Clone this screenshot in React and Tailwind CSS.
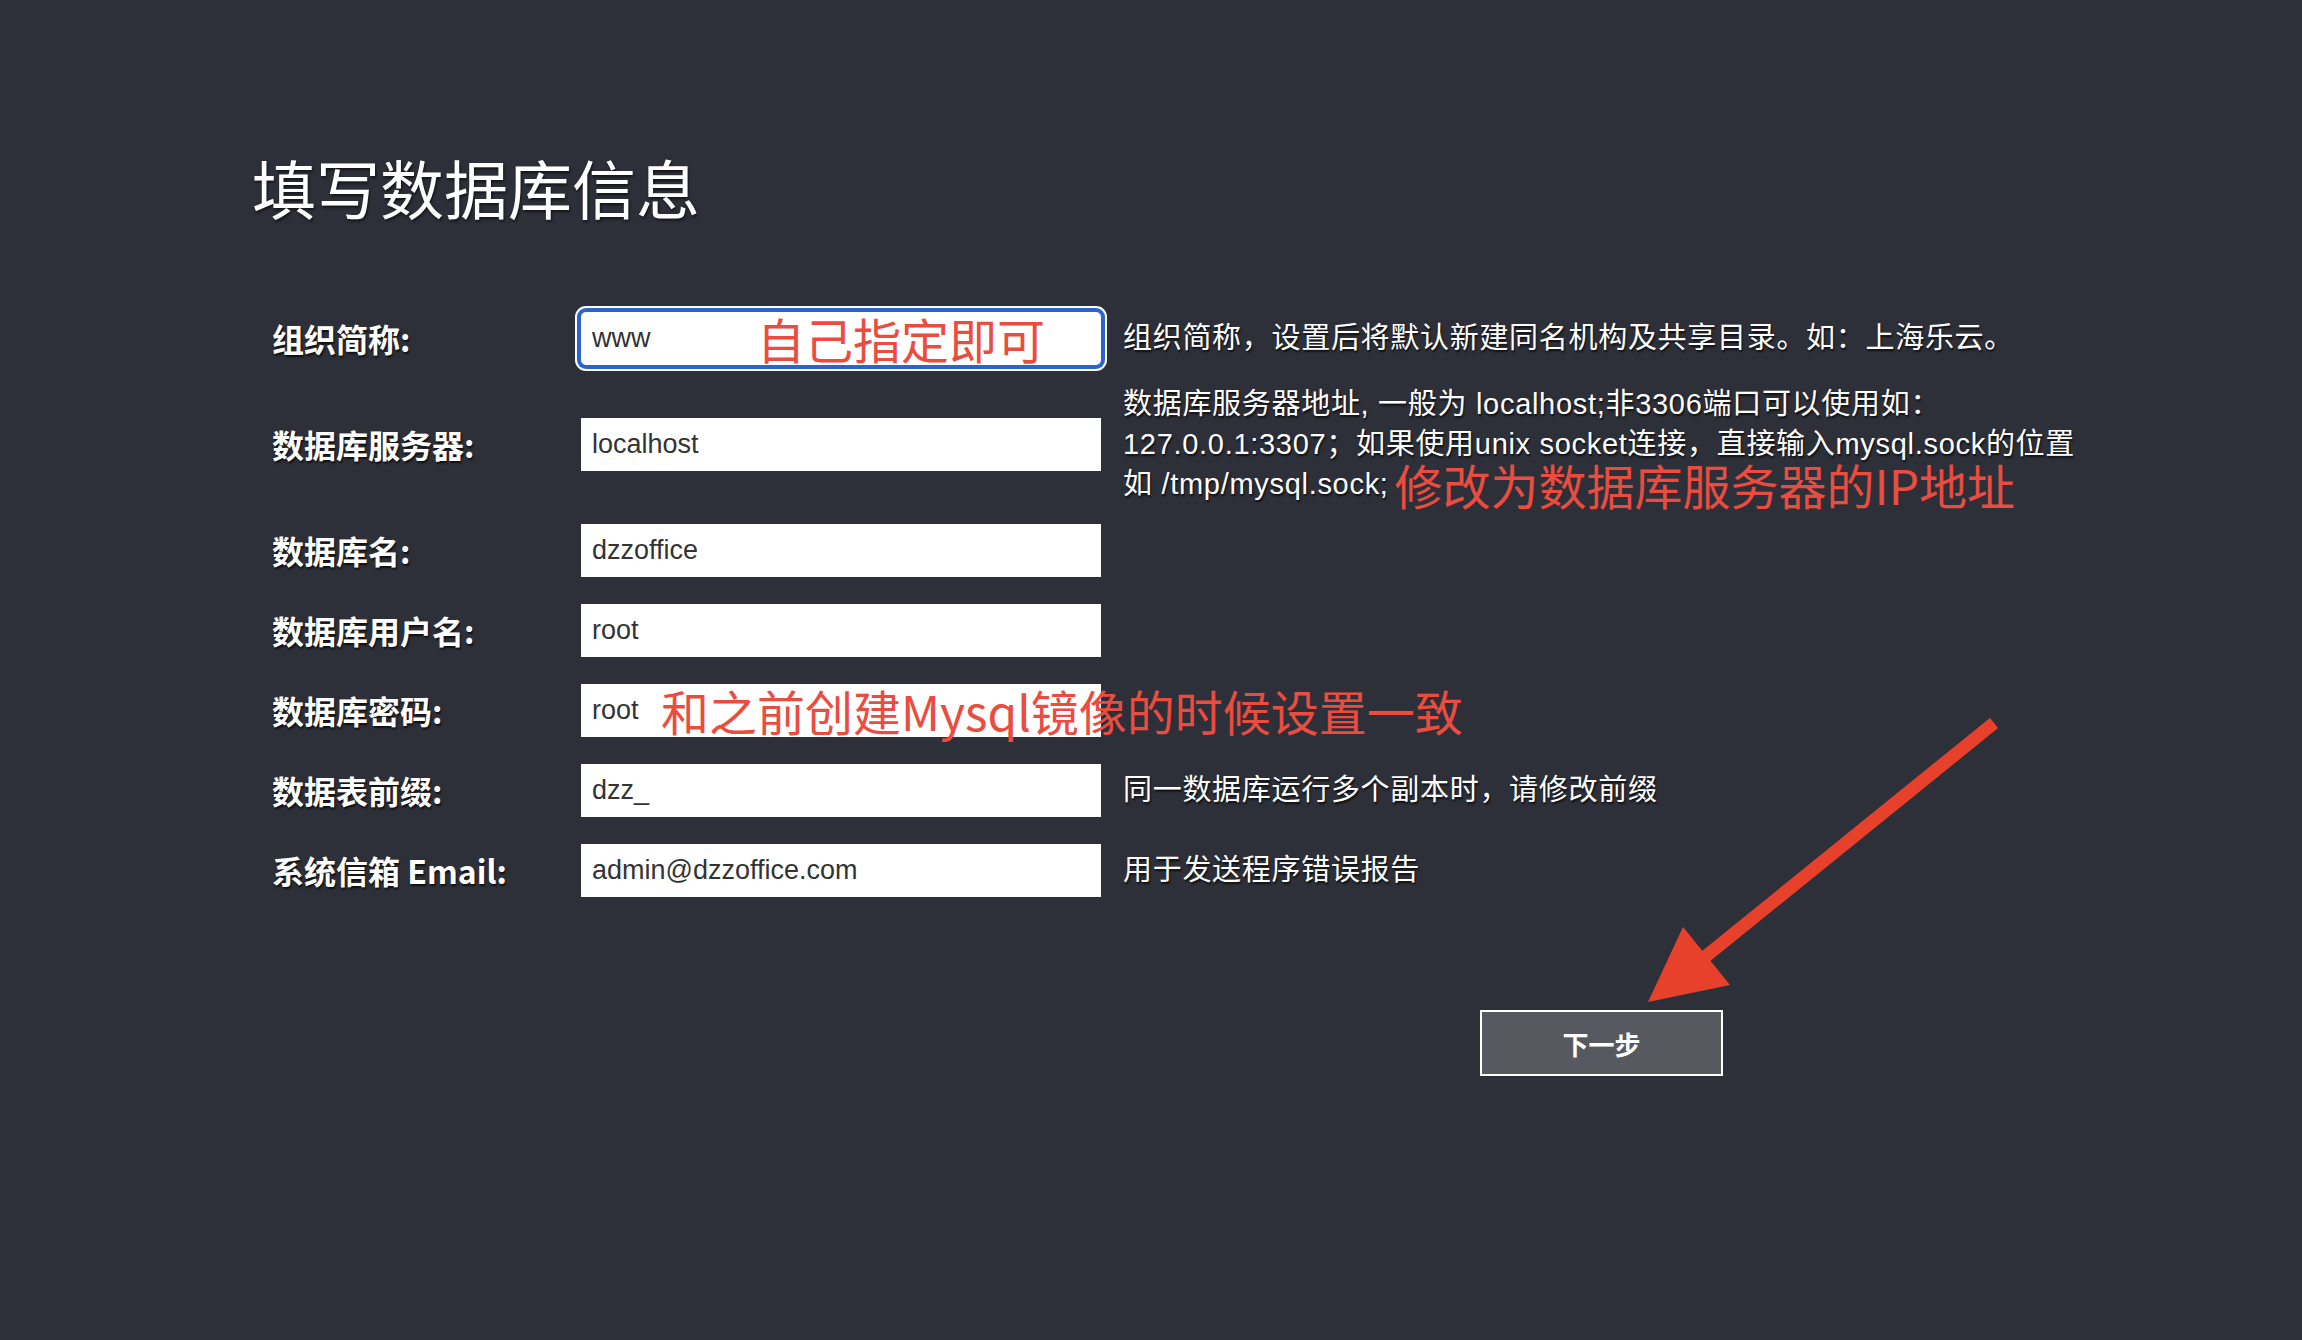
const cjk = "font-['Noto_Sans_CJK_SC',sans-serif]"

function Label({ children }) {
  return (
    <div className="w-[309px] shrink-0 text-[32px] leading-[40px] font-bold text-white font-['Noto_Sans_CJK_SC',sans-serif] [text-shadow:1px_2px_2px_rgba(0,0,0,0.7)]">
      {children}
    </div>
  )
}

function Field({ value, focused, children }) {
  return (
    <div className="relative w-[520px] h-[53px] shrink-0">
      <input
        readOnly
        defaultValue={value}
        className={`w-full h-full bg-white px-[11px] text-[27px] text-[#333] font-['Liberation_Sans',sans-serif] outline-none ${
          focused ? 'rounded-[5px] shadow-[0_0_0_4px_#2c64cf,0_0_0_6px_#ffffff]' : ''
        }`}
      />
      {children}
    </div>
  )
}

function Note({ className, children }) {
  return (
    <span className={`absolute top-1/2 -translate-y-1/2 whitespace-nowrap text-[48px] leading-none text-[#ea4c3f] font-['Noto_Sans_CJK_SC',sans-serif] ${className}`}>
      {children}
    </span>
  )
}

function Desc({ children }) {
  return (
    <div className="ml-[22px] whitespace-nowrap text-[29px] leading-[40px] tracking-[0.7px] text-white font-['Liberation_Sans','Noto_Sans_CJK_SC',sans-serif] [text-shadow:1px_2px_2px_rgba(0,0,0,0.7)]">
      {children}
    </div>
  )
}

export default function App() {
  return (
    <div className="relative min-h-screen w-full bg-[#2e3039] pt-[150px] pl-[252px]">
      <h1 className={`text-[64px] leading-[72px] font-normal text-white ${cjk} [text-shadow:1px_2px_3px_rgba(0,0,0,0.6)]`}>
        填写数据库信息
      </h1>

      <div className="mt-[76px] pl-[20px] flex flex-col">
        <div className="flex items-center h-[80px]">
          <Label>组织简称:</Label>
          <Field value="www" focused>
            <Note className="left-[176px]">自己指定即可</Note>
          </Field>
          <Desc>组织简称，设置后将默认新建同名机构及共享目录。如：上海乐云。</Desc>
        </div>

        <div className="flex items-center h-[132px]">
          <Label>数据库服务器:</Label>
          <Field value="localhost" />
          <Desc>
            <div className="h-[40px]">数据库服务器地址, 一般为 localhost;非3306端口可以使用如：</div>
            <div className="h-[40px]">127.0.0.1:3307；如果使用unix socket连接，直接输入mysql.sock的位置</div>
            <div className="h-[40px] flex items-center">
              <span>如 /tmp/mysql.sock;</span>
              <span className="ml-[6px] text-[48px] leading-none tracking-normal text-[#ea4c3f] [text-shadow:none] font-['Noto_Sans_CJK_SC',sans-serif]">
                修改为数据库服务器的IP地址
              </span>
            </div>
          </Desc>
        </div>

        <div className="flex items-center h-[80px]">
          <Label>数据库名:</Label>
          <Field value="dzzoffice" />
        </div>

        <div className="flex items-center h-[80px]">
          <Label>数据库用户名:</Label>
          <Field value="root" />
        </div>

        <div className="flex items-center h-[80px]">
          <Label>数据库密码:</Label>
          <Field value="root">
            <Note className="left-[80px]">和之前创建Mysql镜像的时候设置一致</Note>
          </Field>
        </div>

        <div className="flex items-center h-[80px]">
          <Label>数据表前缀:</Label>
          <Field value="dzz_" />
          <Desc>同一数据库运行多个副本时，请修改前缀</Desc>
        </div>

        <div className="flex items-center h-[80px]">
          <Label>系统信箱 Email:</Label>
          <Field value="admin@dzzoffice.com" />
          <Desc>用于发送程序错误报告</Desc>
        </div>
      </div>

      <button className={`mt-[100px] ml-[1228px] w-[243px] h-[66px] border-2 border-white bg-[#575961] text-white text-[26px] font-bold ${cjk}`}>
        下一步
      </button>

      {/* red arrow pointing at the button */}
      <svg
        className="absolute left-[1600px] top-[700px] pointer-events-none"
        width="420"
        height="330"
        viewBox="0 0 420 330"
      >
        <line x1="394" y1="23" x2="100" y2="261" stroke="#e8412b" strokeWidth="13" />
        <polygon points="48,302 83,227 130,285" fill="#e8412b" />
      </svg>
    </div>
  )
}
